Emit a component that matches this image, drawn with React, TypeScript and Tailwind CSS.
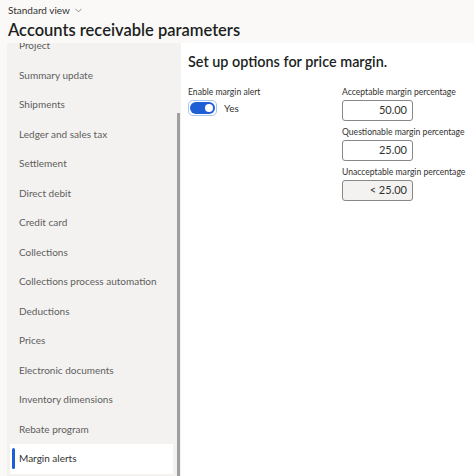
import { ChevronDown } from "lucide-react";

const navItems = [
  "Project",
  "Summary update",
  "Shipments",
  "Ledger and sales tax",
  "Settlement",
  "Direct debit",
  "Credit card",
  "Collections",
  "Collections process automation",
  "Deductions",
  "Prices",
  "Electronic documents",
  "Inventory dimensions",
  "Rebate program",
  "Margin alerts",
];

function Field({ label, value, disabled }: { label: string; value: string; disabled?: boolean }) {
  return (
    <div className="flex flex-col">
      <span className="whitespace-nowrap text-[8.6px] leading-[12px] text-[#323130]">{label}</span>
      <div
        className={`mt-[2px] flex h-[21px] w-[71px] items-center justify-end rounded-[3px] border border-[#8a8886] pr-[5px] text-[11px] text-[#323130] ${
          disabled ? "bg-[#f3f2f1]" : "bg-white"
        }`}
      >
        {value}
      </div>
    </div>
  );
}

export default function App() {
  return (
    <div
      className="flex h-[476px] w-[474px] flex-col overflow-hidden bg-[#faf9f8]"
      style={{ fontFamily: 'Lato, "Noto Sans", sans-serif' }}
    >
      <div className="px-[8px] pt-[2px]">
        <div className="flex items-center gap-[3px] text-[10px] leading-[16px] text-[#323130]">
          Standard view
          <ChevronDown size={11} strokeWidth={1.5} className="text-[#605e5c]" />
        </div>
        <h1 className="mt-[1px] text-[16.5px] font-semibold leading-[22px] text-[#201f1e]">
          Accounts receivable parameters
        </h1>
      </div>

      <div className="ml-[7px] mt-[2px] flex min-h-0 flex-1">
        <div className="relative w-[174px] shrink-0 overflow-hidden bg-[#f3f2f1]">
          <div className="-mt-[12px] flex flex-col pl-[3px] pr-[8px]">
            {navItems.map((item) => {
              const active = item === "Margin alerts";
              return (
                <div
                  key={item}
                  className={`relative flex h-[29.5px] shrink-0 items-center whitespace-nowrap pl-[9px] text-[10px] ${
                    active ? "bg-white text-[#323130]" : "text-[#605e5c]"
                  }`}
                >
                  {active && (
                    <span className="absolute left-[2px] top-[4px] h-[21px] w-[3px] rounded-full bg-[#1f5fd6]" />
                  )}
                  {item}
                </div>
              );
            })}
          </div>
          <div className="absolute right-[1px] top-[70px] bottom-0 w-[3px] bg-[#a19f9d]" />
        </div>

        <div className="flex-1 bg-white pl-[7px] pt-[10px]">
          <h2 className="text-[14.4px] font-semibold leading-[18px] text-[#201f1e]">
            Set up options for price margin.
          </h2>
          <div className="mt-[15px] flex">
            <div className="flex w-[154px] shrink-0 flex-col">
              <span className="text-[8.6px] leading-[12px] text-[#323130]">Enable margin alert</span>
              <div className="mt-[2px] flex items-center gap-[7px]">
                <div className="rounded-[5px] border border-[#a8c4f0] p-[1px]">
                  <div className="flex h-[12px] w-[25px] items-center justify-end rounded-full bg-[#1f5fd6] pr-[2px]">
                    <span className="h-[8px] w-[8px] rounded-full bg-white" />
                  </div>
                </div>
                <span className="text-[10px] text-[#323130]">Yes</span>
              </div>
            </div>
            <div className="flex flex-col gap-[5px]">
              <Field label="Acceptable margin percentage" value="50.00" />
              <Field label="Questionable margin percentage" value="25.00" />
              <Field label="Unacceptable margin percentage" value="< 25.00" disabled />
            </div>
          </div>
        </div>
      </div>
    </div>
  );
}
